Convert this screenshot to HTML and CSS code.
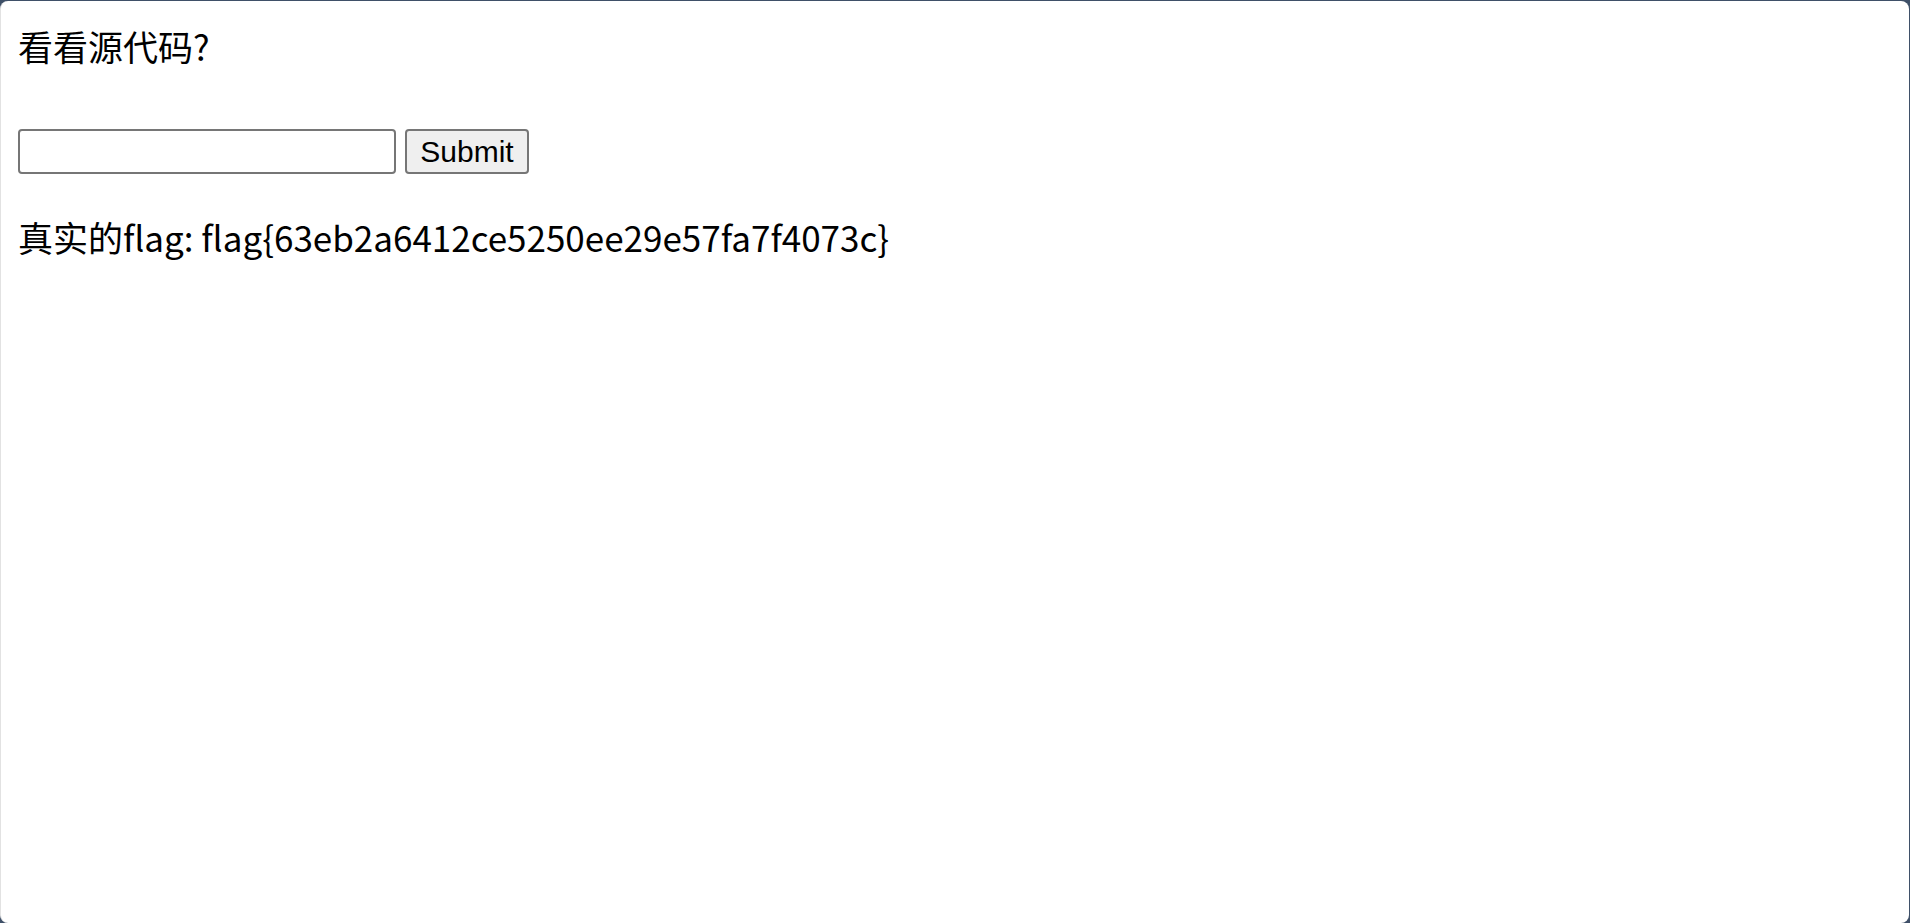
FILE: index.html
```html
<!DOCTYPE html>
<html lang="zh-CN">
<head>
<meta charset="utf-8">
<title>看看源代码?</title>
<link rel="stylesheet" href="styles.css">
</head>
<body>
<div class="panel">
  <div class="line">看看源代码?</div>
  <form class="form" onsubmit="return false">
    <input class="field" type="text" name="input">
    <button class="btn" type="submit">Submit</button>
  </form>
  <div class="line flag">真实的flag: flag{63eb2a6412ce5250ee29e57fa7f4073c}</div>
</div>
</body>
</html>
```
FILE: styles.css
```css
html, body {
  margin: 0;
  padding: 0;
  height: 100%;
}
body {
  background: #3f5068;
  overflow: hidden;
}
.panel {
  box-sizing: border-box;
  height: calc(100vh - 1px);
  margin: 1px 1px 0 0;
  background: #ffffff;
  border-left: 1px solid #e2e2e2;
  border-radius: 8px;
  padding: 19px 17px;
  font-family: "Noto Sans CJK SC", "Noto Sans", sans-serif;
  font-size: 35px;
  color: #000000;
}
.line {
  line-height: 52px;
  height: 52px;
}
.form {
  display: flex;
  gap: 9px;
  margin: 57px 0 0 0;
}
.field {
  box-sizing: border-box;
  width: 378px;
  height: 45px;
  border: 2px solid #767676;
  border-radius: 4px;
  padding: 2px 4px;
  background: #ffffff;
  font-family: "Liberation Sans", Arial, sans-serif;
  font-size: 30px;
  outline: none;
}
.btn {
  box-sizing: border-box;
  width: 124px;
  height: 45px;
  border: 2px solid #767676;
  border-radius: 4px;
  background: #efefef;
  color: #000000;
  padding: 0;
  font-family: "Liberation Sans", Arial, sans-serif;
  font-size: 30px;
}
.flag {
  margin-top: 37px;
}
```
